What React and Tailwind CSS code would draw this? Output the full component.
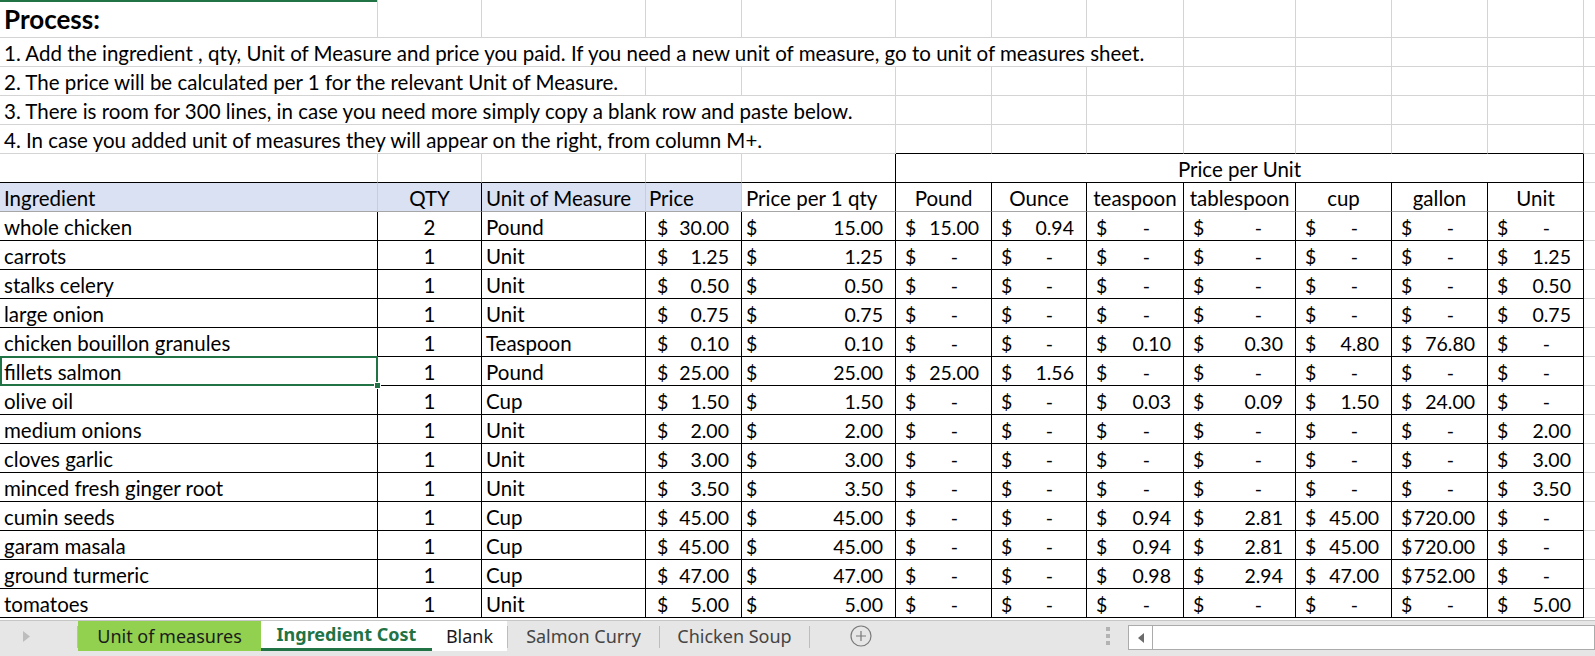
import React from "react";

const GRID = "border-[#d4d4d4]";

const rows = [
  ["whole chicken", "2", "Pound", "30.00", "15.00", "15.00", "0.94", "-", "-", "-", "-", "-"],
  ["carrots", "1", "Unit", "1.25", "1.25", "-", "-", "-", "-", "-", "-", "1.25"],
  ["stalks celery", "1", "Unit", "0.50", "0.50", "-", "-", "-", "-", "-", "-", "0.50"],
  ["large onion", "1", "Unit", "0.75", "0.75", "-", "-", "-", "-", "-", "-", "0.75"],
  ["chicken bouillon granules", "1", "Teaspoon", "0.10", "0.10", "-", "-", "0.10", "0.30", "4.80", "76.80", "-"],
  ["fillets salmon", "1", "Pound", "25.00", "25.00", "25.00", "1.56", "-", "-", "-", "-", "-"],
  ["olive oil", "1", "Cup", "1.50", "1.50", "-", "-", "0.03", "0.09", "1.50", "24.00", "-"],
  ["medium onions", "1", "Unit", "2.00", "2.00", "-", "-", "-", "-", "-", "-", "2.00"],
  ["cloves garlic", "1", "Unit", "3.00", "3.00", "-", "-", "-", "-", "-", "-", "3.00"],
  ["minced fresh ginger root", "1", "Unit", "3.50", "3.50", "-", "-", "-", "-", "-", "-", "3.50"],
  ["cumin seeds", "1", "Cup", "45.00", "45.00", "-", "-", "0.94", "2.81", "45.00", "720.00", "-"],
  ["garam masala", "1", "Cup", "45.00", "45.00", "-", "-", "0.94", "2.81", "45.00", "720.00", "-"],
  ["ground turmeric", "1", "Cup", "47.00", "47.00", "-", "-", "0.98", "2.94", "47.00", "752.00", "-"],
  ["tomatoes", "1", "Unit", "5.00", "5.00", "-", "-", "-", "-", "-", "-", "5.00"],
];

// widths of columns F..L
const UNIT_W = ["w-[96px]", "w-[95px]", "w-[97px]", "w-[112px]", "w-[96px]", "w-[96px]", "w-[96px]"];
const UNIT_NAMES = ["Pound", "Ounce", "teaspoon", "tablespoon", "cup", "gallon", "Unit"];

// text span (labels) – slightly larger than numeric cells
function T({ children, className = "" }) {
  return <span className={`pb-[1px] text-[20.5px] leading-[23px] whitespace-nowrap ${className}`}>{children}</span>;
}

// numeric span
function N({ children, className = "" }) {
  return <span className={`pb-[1px] text-[19.5px] leading-[23px] whitespace-nowrap ${className}`}>{children}</span>;
}

function Money({ w, v, pl = "pl-[9px]" }) {
  return (
    <div className={`shrink-0 h-full border-r border-b border-black flex items-end justify-between pr-[12px] ${w} ${pl}`}>
      <N>$</N>
      <N className={v === "-" ? "pr-[21px]" : ""}>{v}</N>
    </div>
  );
}

function GridCell({ w, children, className = "" }) {
  return (
    <div className={`shrink-0 h-full border-r border-b ${GRID} flex items-end ${w} ${className}`}>{children}</div>
  );
}

function UnitGridCells() {
  return (
    <>
      {UNIT_W.map((w, i) => (
        <GridCell key={i} w={w} />
      ))}
    </>
  );
}

function MCell({ className = "border-b-[#d4d4d4]" }) {
  return <div className={`flex-1 h-full border-b ${className}`} />;
}

export default function App() {
  return (
    <div className="w-[1595px] h-[656px] overflow-hidden bg-white text-black font-['Lato',sans-serif] text-[19.5px] flex flex-col">
      <div className="h-[620px] overflow-hidden shrink-0">
        {/* Row 1 */}
        <div className="flex h-[38px]">
          <div className={`relative shrink-0 w-[378px] h-full border-r border-b ${GRID} flex items-end pl-[4px]`}>
            <div className="absolute top-0 left-0 right-0 h-[2px] bg-[#217346]" />
            <span className="font-bold text-[26px] leading-[31px] pb-[2px]">Process:</span>
          </div>
          <GridCell w="w-[104px]" />
          <GridCell w="w-[164px]" />
          <GridCell w="w-[96px]" />
          <GridCell w="w-[154px]" />
          <UnitGridCells />
          <MCell />
        </div>
        {/* Row 2 */}
        <div className="flex h-[29px]">
          <GridCell w="w-[1184px]" className="pl-[4px]">
            <T>1. Add the ingredient , qty, Unit of Measure and price you paid. If you need a new unit of measure, go to unit of measures sheet.</T>
          </GridCell>
          <GridCell w="w-[112px]" />
          <GridCell w="w-[96px]" />
          <GridCell w="w-[96px]" />
          <GridCell w="w-[96px]" />
          <MCell />
        </div>
        {/* Row 3 */}
        <div className="flex h-[29px]">
          <GridCell w="w-[646px]" className="pl-[4px]">
            <T>2. The price will be calculated per 1 for the relevant Unit of Measure.</T>
          </GridCell>
          <GridCell w="w-[96px]" />
          <GridCell w="w-[154px]" />
          <UnitGridCells />
          <MCell />
        </div>
        {/* Row 4 */}
        <div className="flex h-[29px]">
          <GridCell w="w-[896px]" className="pl-[4px]">
            <T>3. There is room for 300 lines, in case you need more simply copy a blank row and paste below.</T>
          </GridCell>
          <UnitGridCells />
          <MCell />
        </div>
        {/* Row 5 */}
        <div className="flex h-[29px]">
          <GridCell w="w-[896px]" className="pl-[4px]">
            <T>4. In case you added unit of measures they will appear on the right, from column M+.</T>
          </GridCell>
          {UNIT_W.map((w, i) => (
            <div key={i} className={`shrink-0 h-full border-r border-b border-r-[#d4d4d4] border-b-black ${w}`} />
          ))}
          <MCell />
        </div>
        {/* Row 6 : Price per Unit */}
        <div className="flex h-[29px]">
          <div className="shrink-0 w-[378px] h-full border-r border-b border-r-[#d4d4d4] border-b-black" />
          <div className="shrink-0 w-[104px] h-full border-r border-b border-r-[#d4d4d4] border-b-black" />
          <div className="shrink-0 w-[164px] h-full border-r border-b border-r-[#d4d4d4] border-b-black" />
          <div className="shrink-0 w-[96px] h-full border-r border-b border-r-[#d4d4d4] border-b-black" />
          <div className="shrink-0 w-[154px] h-full border-r border-b border-black" />
          <div className="shrink-0 w-[688px] h-full border-r border-b border-black flex items-end justify-center">
            <T>Price per Unit</T>
          </div>
          <MCell />
        </div>
        {/* Header row */}
        <div className="flex h-[29px]">
          <div className="shrink-0 w-[378px] h-full bg-[#d9e1f2] border-r border-b border-r-[#c8cdd6] border-b-[#a6a6a6] flex items-end pl-[4px]">
            <T>Ingredient</T>
          </div>
          <div className="shrink-0 w-[104px] h-full bg-[#d9e1f2] border-r border-b border-r-black border-b-[#a6a6a6] flex items-end justify-center">
            <T>QTY</T>
          </div>
          <div className="shrink-0 w-[164px] h-full bg-[#d9e1f2] border-r border-b border-r-[#c8cdd6] border-b-[#a6a6a6] flex items-end pl-[4px]">
            <T>Unit of Measure</T>
          </div>
          <div className="shrink-0 w-[96px] h-full bg-[#d9e1f2] border-r border-b border-r-[#c8cdd6] border-b-[#a6a6a6] flex items-end pl-[3px]">
            <T>Price</T>
          </div>
          <div className="shrink-0 w-[154px] h-full border-r border-b border-r-black border-b-[#a6a6a6] flex items-end pl-[4px]">
            <T>Price per 1 qty</T>
          </div>
          {UNIT_W.map((w, i) => (
            <div key={i} className={`shrink-0 h-full border-r border-b border-r-black border-b-[#a6a6a6] flex items-end justify-center ${w}`}>
              <T>{UNIT_NAMES[i]}</T>
            </div>
          ))}
          <MCell />
        </div>
        {/* Data rows */}
        {rows.map((r, ri) => (
          <div key={ri} className="flex h-[29px]">
            <div className="relative shrink-0 w-[378px] h-full border-r border-b border-black flex items-end pl-[4px]">
              <T>{r[0]}</T>
              {ri === 5 && (
                <div className="absolute top-[-1px] left-0 right-[-1px] bottom-[-1px] border-2 border-[#217346] z-10">
                  <div className="absolute right-[-5px] bottom-[-5px] w-[7px] h-[7px] bg-[#217346] border border-white" />
                </div>
              )}
            </div>
            <div className="shrink-0 w-[104px] h-full border-r border-b border-black flex items-end justify-center">
              <T>{r[1]}</T>
            </div>
            <div className="shrink-0 w-[164px] h-full border-r border-b border-black flex items-end pl-[4px]">
              <T>{r[2]}</T>
            </div>
            <Money w="w-[96px]" v={r[3]} pl="pl-[11px]" />
            <Money w="w-[154px]" v={r[4]} pl="pl-[4px]" />
            {UNIT_W.map((w, i) => (
              <Money key={i} w={w} v={r[5 + i]} />
            ))}
            <MCell />
          </div>
        ))}
      </div>

      {/* Sheet tab bar */}
      <div className="flex-1 bg-[#e6e6e6] border-t border-[#c6c6c6] flex items-start font-['Noto_Sans',sans-serif] text-[18px]">
        <div className="shrink-0 w-[77px] h-[30px] flex items-center pl-[23px]">
          <svg width="7" height="11" viewBox="0 0 7 11">
            <path d="M0 0 L7 5.5 L0 11 Z" fill="#bdbdbd" />
          </svg>
        </div>
        <div className="shrink-0 w-px h-[22px] mt-[5px] bg-[#bdbdbd]" />
        <div className="shrink-0 w-[183px] h-[30px] bg-[#92d050] flex items-center justify-center text-[#1a1a1a]">
          Unit of measures
        </div>
        <div className="shrink-0 w-[171px] h-[30px] bg-white border-b-[3px] border-[#217346] flex items-center justify-center font-bold text-[#217346]">
          Ingredient Cost
        </div>
        <div className="shrink-0 w-[75px] h-[30px] bg-white flex items-center justify-center text-[#1a1a1a]">
          Blank
        </div>
        <div className="shrink-0 w-px h-[22px] mt-[5px] bg-[#bdbdbd]" />
        <div className="shrink-0 w-[151px] h-[30px] flex items-center justify-center text-[#444444]">
          Salmon Curry
        </div>
        <div className="shrink-0 w-px h-[22px] mt-[5px] bg-[#bdbdbd]" />
        <div className="shrink-0 w-[149px] h-[30px] flex items-center justify-center text-[#444444]">
          Chicken Soup
        </div>
        <div className="shrink-0 w-px h-[22px] mt-[5px] bg-[#bdbdbd]" />
        <div className="shrink-0 w-[102px] h-[30px] flex items-center pl-[40px]">
          <svg width="22" height="22" viewBox="0 0 22 22">
            <circle cx="11" cy="11" r="10" fill="none" stroke="#7a7a7a" strokeWidth="1.2" />
            <path d="M11 6 V16 M6 11 H16" stroke="#7a7a7a" strokeWidth="1.2" />
          </svg>
        </div>
        <div className="flex-1" />
        <div className="shrink-0 w-[16px] h-[30px] flex items-center justify-center">
          <svg width="4" height="18" viewBox="0 0 4 18">
            <rect x="0" y="0" width="4" height="4" fill="#b3b3b3" />
            <rect x="0" y="7" width="4" height="4" fill="#b3b3b3" />
            <rect x="0" y="14" width="4" height="4" fill="#b3b3b3" />
          </svg>
        </div>
        <div className="shrink-0 w-[12px]" />
        <div className="shrink-0 w-[467px] h-[25px] mt-[4px] bg-white border border-[#ababab] flex">
          <div className="shrink-0 w-[24px] h-full border-r border-[#ababab] flex items-center justify-center">
            <svg width="6" height="10" viewBox="0 0 6 10">
              <path d="M6 0 L0 5 L6 10 Z" fill="#6b6b6b" />
            </svg>
          </div>
        </div>
      </div>
    </div>
  );
}
